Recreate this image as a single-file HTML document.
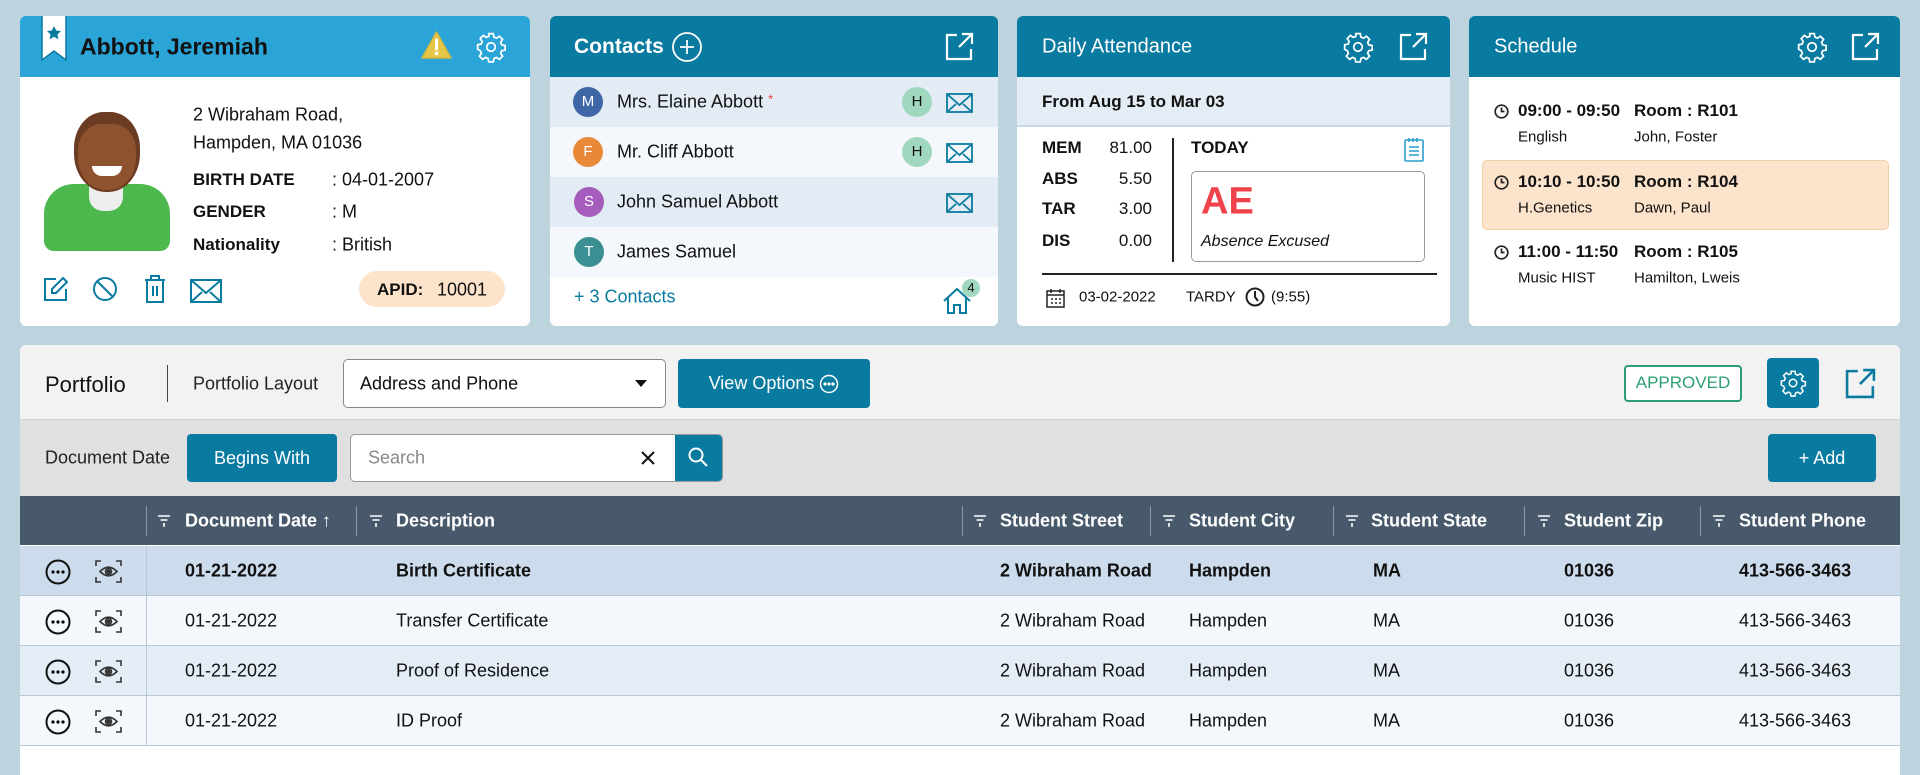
<!DOCTYPE html>
<html><head><meta charset="utf-8"><style>
*{box-sizing:border-box;margin:0;padding:0}
body{width:1920px;height:763px;overflow:hidden;background:#bdd3dd;font-family:"Liberation Sans",sans-serif;color:#111;position:relative}
.a{position:absolute}
.card{position:absolute;background:#fff;border-radius:6px;overflow:hidden;top:16px;height:310px}
.hd{position:absolute;left:0;top:0;right:0;height:61px;background:#0a7ba0;color:#fff}
.t{position:absolute;white-space:nowrap}
.c{transform:translateY(-50%)}
.f18{font-size:18px}.f17{font-size:17px}.f16{font-size:16px}.f15{font-size:15px}
.b{font-weight:bold}
svg{position:absolute;overflow:visible}
.row{position:absolute;left:0;right:0}
.btn{position:absolute;background:#0a7ba0;border-radius:4px;color:#fff;font-size:18px;display:flex;align-items:center;justify-content:center}
.th{font-size:18px;color:#fff;font-weight:bold;top:521px}
.vd{position:absolute;width:1px;background:#8a99a8;top:506px;height:30px}
</style></head><body>

<!-- Card 1 -->
<div class="card" style="left:20px;width:510px">
  <div class="hd" style="background:#2ba4d8"></div>
  <svg style="left:21px;top:0" width="26" height="45" viewBox="0 0 26 45"><path d="M1 0V44L13 35L25 44V0" fill="#fff" stroke="#0a7ba0" stroke-width="1.5"/><path d="M13 10l2.2 4.5 4.8.6-3.5 3.3.9 4.8-4.4-2.4-4.4 2.4.9-4.8-3.5-3.3 4.8-.6z" fill="#0a7ba0"/></svg>
  <div class="t c b" style="left:60px;top:31px;font-size:23px;color:#111">Abbott, Jeremiah</div>
  <svg style="left:401px;top:15px" width="31" height="28" viewBox="0 0 31 28"><path d="M15.5 1L30 27H1z" fill="#e6c74a" stroke="#d6b53a" stroke-width="1.5" stroke-linejoin="round"/><path d="M15.5 9v9" stroke="#fff" stroke-width="3" stroke-linecap="round"/><circle cx="15.5" cy="22.5" r="1.8" fill="#fff"/></svg>
  <svg style="left:455px;top:15px" width="32" height="32" viewBox="0 0 24 24" fill="none" stroke="#fff" stroke-width="1.3"><circle cx="12" cy="12" r="3.2"/><path d="M10.3 2h3.4l.5 2.6 1.9.8 2.2-1.5 2.4 2.4-1.5 2.2.8 1.9 2.6.5v3.4l-2.6.5-.8 1.9 1.5 2.2-2.4 2.4-2.2-1.5-1.9.8-.5 2.6h-3.4l-.5-2.6-1.9-.8-2.2 1.5-2.4-2.4 1.5-2.2-.8-1.9L2 13.7v-3.4l2.6-.5.8-1.9-1.5-2.2 2.4-2.4 2.2 1.5 1.9-.8z"/></svg>
  <div class="a" style="left:24px;top:88px;width:126px;height:147px;border-radius:10px;overflow:hidden;background:#fff">
    <div class="a" style="left:0;top:80px;width:126px;height:70px;background:#4cb84e;border-radius:30px 30px 10px 10px"></div>
    <div class="a" style="left:45px;top:82px;width:34px;height:25px;background:#eee;border-radius:0 0 14px 14px"></div>
    <div class="a" style="left:30px;top:8px;width:66px;height:80px;background:#6b3b22;border-radius:45% 45% 48% 48%"></div>
    <div class="a" style="left:34px;top:20px;width:58px;height:66px;background:#8e522e;border-radius:40% 40% 48% 48%"></div>
    <div class="a" style="left:48px;top:62px;width:30px;height:10px;background:#fff;border-radius:0 0 10px 10px"></div>
  </div>
  <div class="t c f18" style="left:173px;top:99px">2 Wibraham Road,</div>
  <div class="t c f18" style="left:173px;top:127px">Hampden, MA 01036</div>
  <div class="t c f17 b" style="left:173px;top:164px">BIRTH DATE</div>
  <div class="t c f18" style="left:312px;top:164px">: 04-01-2007</div>
  <div class="t c f17 b" style="left:173px;top:196px">GENDER</div>
  <div class="t c f18" style="left:312px;top:196px">: M</div>
  <div class="t c f17 b" style="left:173px;top:229px">Nationality</div>
  <div class="t c f18" style="left:312px;top:229px">: British</div>
  <svg style="left:23px;top:260px" width="26" height="26" viewBox="0 0 26 26" fill="none" stroke="#0a7ba0" stroke-width="2"><path d="M13 3H2v21h21V13"/><path d="M20 2l4 4-11 11H9v-4z"/></svg>
  <svg style="left:72px;top:260px" width="26" height="26" viewBox="0 0 26 26" fill="none" stroke="#0a7ba0" stroke-width="2"><circle cx="13" cy="13" r="11"/><path d="M5 5l16 16"/></svg>
  <svg style="left:124px;top:259px" width="22" height="28" viewBox="0 0 22 28" fill="none" stroke="#0a7ba0" stroke-width="2"><path d="M1 5h20M7 5V1h8v4M3 5v22h16V5M9 11v10M13 11v10"/></svg>
  <svg style="left:170px;top:263px" width="32" height="24" viewBox="0 0 32 24" fill="none" stroke="#0a7ba0" stroke-width="2"><rect x="1" y="1" width="30" height="22"/><path d="M1 1l15 13L31 1M1 23l11-10M31 23L20 13"/></svg>
  <div class="a" style="left:339px;top:255px;width:146px;height:36px;background:#fde3cc;border-radius:18px"></div>
  <div class="t c b f17" style="left:357px;top:274px">APID:</div>
  <div class="t c f18" style="left:417px;top:274px">10001</div>
</div>

<!-- Contacts -->
<div class="card" style="left:550px;width:448px">
  <div class="hd"></div>
  <div class="t c b" style="left:24px;top:31px;font-size:21px;color:#fff">Contacts</div>
  <svg style="left:122px;top:16px" width="30" height="30" viewBox="0 0 30 30" fill="none" stroke="#fff" stroke-width="1.8"><circle cx="15" cy="15" r="14"/><path d="M15 8v14M8 15h14"/></svg>
  <svg style="left:396px;top:17px" width="27" height="27" viewBox="0 0 27 27" fill="none" stroke="#fff" stroke-width="2.2"><path d="M11 2H1v24h24V16M16 1h10v10M26 1L13 14"/></svg>
  <div class="row" style="top:61px;height:50px;background:#e3ebf4"></div>
  <div class="row" style="top:111px;height:50px;background:#f4f7fb"></div>
  <div class="row" style="top:161px;height:50px;background:#e3ebf4"></div>
  <div class="row" style="top:211px;height:50px;background:#f4f7fb"></div>
  <div class="a" style="left:23px;top:71px;width:30px;height:30px;border-radius:50%;background:#3f66a6;color:#fff;font-size:15px;text-align:center;line-height:30px">M</div>
  <div class="a" style="left:23px;top:121px;width:30px;height:30px;border-radius:50%;background:#e8893a;color:#fff;font-size:15px;text-align:center;line-height:30px">F</div>
  <div class="a" style="left:24px;top:171px;width:30px;height:30px;border-radius:50%;background:#a55cbd;color:#fff;font-size:15px;text-align:center;line-height:30px">S</div>
  <div class="a" style="left:24px;top:221px;width:30px;height:30px;border-radius:50%;background:#3b8e91;color:#fff;font-size:15px;text-align:center;line-height:30px">T</div>
  <div class="t c f18" style="left:67px;top:86px">Mrs. Elaine Abbott <span style="color:#e04040;font-size:13px;vertical-align:top">*</span></div>
  <div class="t c f18" style="left:67px;top:136px">Mr. Cliff Abbott</div>
  <div class="t c f18" style="left:67px;top:186px">John Samuel Abbott</div>
  <div class="t c f18" style="left:67px;top:236px">James Samuel</div>
  <div class="a" style="left:352px;top:71px;width:30px;height:30px;border-radius:50%;background:#9fd8be;font-size:15px;text-align:center;line-height:30px">H</div>
  <div class="a" style="left:352px;top:121px;width:30px;height:30px;border-radius:50%;background:#9fd8be;font-size:15px;text-align:center;line-height:30px">H</div>
  <svg style="left:396px;top:77px" width="27" height="20" viewBox="0 0 27 20" fill="none" stroke="#0a7ba0" stroke-width="1.8"><rect x="1" y="1" width="25" height="18"/><path d="M1 1l12.5 11L26 1M1 19l9-8M26 19l-9-8"/></svg>
  <svg style="left:396px;top:127px" width="27" height="20" viewBox="0 0 27 20" fill="none" stroke="#0a7ba0" stroke-width="1.8"><rect x="1" y="1" width="25" height="18"/><path d="M1 1l12.5 11L26 1M1 19l9-8M26 19l-9-8"/></svg>
  <svg style="left:396px;top:177px" width="27" height="20" viewBox="0 0 27 20" fill="none" stroke="#0a7ba0" stroke-width="1.8"><rect x="1" y="1" width="25" height="18"/><path d="M1 1l12.5 11L26 1M1 19l9-8M26 19l-9-8"/></svg>
  <div class="t c f18" style="left:24px;top:281px;color:#0a7ba0">+ 3 Contacts</div>
  <svg style="left:393px;top:272px" width="28" height="26" viewBox="0 0 28 26" fill="none" stroke="#0a7ba0" stroke-width="2"><path d="M1 13L14 1l13 12M5 10v15h6v-8h6v8h6V10"/></svg>
  <div class="a" style="left:412px;top:263px;width:18px;height:18px;border-radius:50%;background:#9fd8be;font-size:13px;text-align:center;line-height:18px">4</div>
</div>

<!-- Attendance -->
<div class="card" style="left:1017px;width:433px">
  <div class="hd"></div>
  <div class="t c" style="left:25px;top:31px;font-size:20px;color:#fff">Daily Attendance</div>
  <svg style="left:325px;top:15px" width="32" height="32" viewBox="0 0 24 24" fill="none" stroke="#fff" stroke-width="1.3"><circle cx="12" cy="12" r="3.2"/><path d="M10.3 2h3.4l.5 2.6 1.9.8 2.2-1.5 2.4 2.4-1.5 2.2.8 1.9 2.6.5v3.4l-2.6.5-.8 1.9 1.5 2.2-2.4 2.4-2.2-1.5-1.9.8-.5 2.6h-3.4l-.5-2.6-1.9-.8-2.2 1.5-2.4-2.4 1.5-2.2-.8-1.9L2 13.7v-3.4l2.6-.5.8-1.9-1.5-2.2 2.4-2.4 2.2 1.5 1.9-.8z"/></svg>
  <svg style="left:383px;top:17px" width="27" height="27" viewBox="0 0 27 27" fill="none" stroke="#fff" stroke-width="2.2"><path d="M11 2H1v24h24V16M16 1h10v10M26 1L13 14"/></svg>
  <div class="row" style="top:61px;height:50px;background:#e4edf6;border-bottom:2px solid #c9d6e3"></div>
  <div class="t c b f17" style="left:25px;top:86px">From Aug 15 to Mar 03</div>
  <div class="t c b f17" style="left:25px;top:132px">MEM</div><div class="t c f17" style="right:298px;top:132px">81.00</div>
  <div class="t c b f17" style="left:25px;top:163px">ABS</div><div class="t c f17" style="right:298px;top:163px">5.50</div>
  <div class="t c b f17" style="left:25px;top:193px">TAR</div><div class="t c f17" style="right:298px;top:193px">3.00</div>
  <div class="t c b f17" style="left:25px;top:225px">DIS</div><div class="t c f17" style="right:298px;top:225px">0.00</div>
  <div class="a" style="left:155px;top:122px;width:2px;height:124px;background:#222"></div>
  <div class="t c b f17" style="left:174px;top:132px">TODAY</div>
  <svg style="left:387px;top:121px" width="20" height="25" viewBox="0 0 20 25" fill="none" stroke="#2a9fcc" stroke-width="1.6"><rect x="1" y="3" width="18" height="21" rx="1"/><path d="M5 1v4M9 1v4M13 1v4M5 10h10M5 14h10M5 18h10"/></svg>
  <div class="a" style="left:174px;top:155px;width:234px;height:91px;border:1.5px solid #999;border-radius:5px"></div>
  <div class="t c b" style="left:184px;top:186px;font-size:38px;color:#f0424a">AE</div>
  <div class="t c" style="left:184px;top:226px;font-size:16px;font-style:italic">Absence Excused</div>
  <div class="a" style="left:25px;top:257px;width:395px;height:2px;background:#222"></div>
  <svg style="left:29px;top:272px" width="19" height="20" viewBox="0 0 19 20" fill="none" stroke="#222" stroke-width="1.5"><rect x="1" y="3" width="17" height="16"/><path d="M1 7h17M5 1v4M14 1v4M5 11h2M9 11h2M13 11h2M5 15h2M9 15h2M13 15h2"/></svg>
  <div class="t c f15" style="left:62px;top:281px">03-02-2022</div>
  <div class="t c f15" style="left:169px;top:281px">TARDY</div>
  <svg style="left:228px;top:271px" width="20" height="20" viewBox="0 0 20 20" fill="none" stroke="#222" stroke-width="2"><circle cx="10" cy="10" r="8.5"/><path d="M10 4v6l3 4"/></svg>
  <div class="t c f15" style="left:254px;top:281px">(9:55)</div>
</div>

<!-- Schedule -->
<div class="card" style="left:1469px;width:431px">
  <div class="hd"></div>
  <div class="t c" style="left:25px;top:31px;font-size:20px;color:#fff">Schedule</div>
  <svg style="left:327px;top:15px" width="32" height="32" viewBox="0 0 24 24" fill="none" stroke="#fff" stroke-width="1.3"><circle cx="12" cy="12" r="3.2"/><path d="M10.3 2h3.4l.5 2.6 1.9.8 2.2-1.5 2.4 2.4-1.5 2.2.8 1.9 2.6.5v3.4l-2.6.5-.8 1.9 1.5 2.2-2.4 2.4-2.2-1.5-1.9.8-.5 2.6h-3.4l-.5-2.6-1.9-.8-2.2 1.5-2.4-2.4 1.5-2.2-.8-1.9L2 13.7v-3.4l2.6-.5.8-1.9-1.5-2.2 2.4-2.4 2.2 1.5 1.9-.8z"/></svg>
  <svg style="left:383px;top:17px" width="27" height="27" viewBox="0 0 27 27" fill="none" stroke="#fff" stroke-width="2.2"><path d="M11 2H1v24h24V16M16 1h10v10M26 1L13 14"/></svg>
  <div class="a" style="left:13px;top:144px;width:407px;height:70px;background:#fce3cb;border:1px solid #f2cfa8;border-radius:5px"></div>
  <svg style="left:25px;top:88px" width="15" height="15" viewBox="0 0 15 15" fill="none" stroke="#222" stroke-width="1.7"><circle cx="7.5" cy="7.5" r="6.3"/><path d="M7.5 3.5v4h3"/></svg>
  <div class="t c b f17" style="left:49px;top:95px">09:00 - 09:50</div><div class="t c b f17" style="left:165px;top:95px">Room : R101</div>
  <div class="t c f15" style="left:49px;top:121px">English</div><div class="t c f15" style="left:165px;top:121px">John, Foster</div>
  <svg style="left:25px;top:159px" width="15" height="15" viewBox="0 0 15 15" fill="none" stroke="#222" stroke-width="1.7"><circle cx="7.5" cy="7.5" r="6.3"/><path d="M7.5 3.5v4h3"/></svg>
  <div class="t c b f17" style="left:49px;top:166px">10:10 - 10:50</div><div class="t c b f17" style="left:165px;top:166px">Room : R104</div>
  <div class="t c f15" style="left:49px;top:192px">H.Genetics</div><div class="t c f15" style="left:165px;top:192px">Dawn, Paul</div>
  <svg style="left:25px;top:229px" width="15" height="15" viewBox="0 0 15 15" fill="none" stroke="#222" stroke-width="1.7"><circle cx="7.5" cy="7.5" r="6.3"/><path d="M7.5 3.5v4h3"/></svg>
  <div class="t c b f17" style="left:49px;top:236px">11:00 - 11:50</div><div class="t c b f17" style="left:165px;top:236px">Room : R105</div>
  <div class="t c f15" style="left:49px;top:262px">Music HIST</div><div class="t c f15" style="left:165px;top:262px">Hamilton, Lweis</div>
</div>

<!-- Portfolio -->
<div class="a" style="left:20px;top:345px;width:1880px;height:430px;background:#fff;border-radius:6px 6px 0 0;overflow:hidden">
  <div class="row" style="top:0;height:75px;background:#f2f2f2;border-bottom:1px solid #cfcfcf"></div>
  <div class="row" style="top:75px;height:76px;background:#e0e0e0"></div>
  <div class="row" style="top:151px;height:49px;background:#48596b"></div>
  <div class="row" style="top:201px;height:50px;background:#cddcec;border-bottom:1px solid #b7c8d9"></div>
  <div class="row" style="top:251px;height:50px;background:#f4f8fc;border-bottom:1px solid #b7c8d9"></div>
  <div class="row" style="top:301px;height:50px;background:#e4edf6;border-bottom:1px solid #b7c8d9"></div>
  <div class="row" style="top:351px;height:50px;background:#f4f8fc;border-bottom:1px solid #b7c8d9"></div>
  <div class="a" style="left:126px;top:201px;width:1px;height:200px;background:#b7c8d9"></div>
</div>
<div class="t c" style="left:45px;top:385px;font-size:22px">Portfolio</div>
<div class="a" style="left:167px;top:365px;width:1px;height:37px;background:#444"></div>
<div class="t c f18" style="left:193px;top:384px;color:#222">Portfolio Layout</div>
<div class="a" style="left:343px;top:359px;width:323px;height:49px;background:#fff;border:1px solid #888;border-radius:5px"></div>
<div class="t c f18" style="left:360px;top:384px">Address and Phone</div>
<svg style="left:635px;top:380px" width="12" height="7" viewBox="0 0 12 7"><path d="M0 0h12L6 7z" fill="#111"/></svg>
<div class="btn" style="left:678px;top:359px;width:192px;height:49px">View Options&nbsp;<svg style="position:relative" width="20" height="20" viewBox="0 0 20 20" fill="none" stroke="#fff" stroke-width="1.5"><circle cx="10" cy="10" r="8.5"/><circle cx="6" cy="10" r=".9" fill="#fff"/><circle cx="10" cy="10" r=".9" fill="#fff"/><circle cx="14" cy="10" r=".9" fill="#fff"/></svg></div>
<div class="a" style="left:1624px;top:365px;width:118px;height:37px;border:2.5px solid #2e9e72;border-radius:4px;background:#fff;color:#2e9e72;font-size:17px;text-align:center;line-height:32px">APPROVED</div>
<div class="btn" style="left:1767px;top:358px;width:52px;height:50px"><svg style="position:relative" width="28" height="28" viewBox="0 0 24 24" fill="none" stroke="#fff" stroke-width="1.3"><circle cx="12" cy="12" r="3.2"/><path d="M10.3 2h3.4l.5 2.6 1.9.8 2.2-1.5 2.4 2.4-1.5 2.2.8 1.9 2.6.5v3.4l-2.6.5-.8 1.9 1.5 2.2-2.4 2.4-2.2-1.5-1.9.8-.5 2.6h-3.4l-.5-2.6-1.9-.8-2.2 1.5-2.4-2.4 1.5-2.2-.8-1.9L2 13.7v-3.4l2.6-.5.8-1.9-1.5-2.2 2.4-2.4 2.2 1.5 1.9-.8z"/></svg></div>
<svg style="left:1846px;top:369px" width="29" height="29" viewBox="0 0 27 27" fill="none" stroke="#0a7ba0" stroke-width="2.4"><path d="M11 2H1v24h24V16M16 1h10v10M26 1L13 14"/></svg>

<div class="t c f18" style="left:45px;top:458px;color:#222">Document Date</div>
<div class="btn" style="left:187px;top:434px;width:150px;height:48px">Begins With</div>
<div class="a" style="left:350px;top:434px;width:373px;height:48px;background:#fff;border:1px solid #999;border-radius:5px;overflow:hidden"><div class="a" style="right:0;top:0;width:47px;height:48px;background:#0a7ba0"></div></div>
<div class="t c f18" style="left:368px;top:458px;color:#888">Search</div>
<svg style="left:641px;top:451px" width="14" height="14" viewBox="0 0 14 14" stroke="#111" stroke-width="2"><path d="M1 1l12 12M13 1L1 13"/></svg>
<svg style="left:688px;top:447px" width="20" height="20" viewBox="0 0 20 20" fill="none" stroke="#fff" stroke-width="2"><circle cx="8" cy="8" r="6.5"/><path d="M13 13l6 6"/></svg>
<div class="btn" style="left:1768px;top:434px;width:108px;height:48px">+ Add</div>

<div class="vd" style="left:146px"></div><div class="vd" style="left:356px"></div><div class="vd" style="left:962px"></div><div class="vd" style="left:1150px"></div><div class="vd" style="left:1333px"></div><div class="vd" style="left:1524px"></div><div class="vd" style="left:1700px"></div>
<svg style="left:157px;top:514px" width="14" height="14" viewBox="0 0 14 14" stroke="#fff" stroke-width="1.5"><path d="M1 2h12M3.5 6h7M6 10h2M7 10v3"/></svg>
<svg style="left:369px;top:514px" width="14" height="14" viewBox="0 0 14 14" stroke="#fff" stroke-width="1.5"><path d="M1 2h12M3.5 6h7M6 10h2M7 10v3"/></svg>
<svg style="left:973px;top:514px" width="14" height="14" viewBox="0 0 14 14" stroke="#fff" stroke-width="1.5"><path d="M1 2h12M3.5 6h7M6 10h2M7 10v3"/></svg>
<svg style="left:1162px;top:514px" width="14" height="14" viewBox="0 0 14 14" stroke="#fff" stroke-width="1.5"><path d="M1 2h12M3.5 6h7M6 10h2M7 10v3"/></svg>
<svg style="left:1345px;top:514px" width="14" height="14" viewBox="0 0 14 14" stroke="#fff" stroke-width="1.5"><path d="M1 2h12M3.5 6h7M6 10h2M7 10v3"/></svg>
<svg style="left:1537px;top:514px" width="14" height="14" viewBox="0 0 14 14" stroke="#fff" stroke-width="1.5"><path d="M1 2h12M3.5 6h7M6 10h2M7 10v3"/></svg>
<svg style="left:1712px;top:514px" width="14" height="14" viewBox="0 0 14 14" stroke="#fff" stroke-width="1.5"><path d="M1 2h12M3.5 6h7M6 10h2M7 10v3"/></svg>
<div class="t c th" style="left:185px">Document Date ↑</div>
<div class="t c th" style="left:396px">Description</div>
<div class="t c th" style="left:1000px">Student Street</div>
<div class="t c th" style="left:1189px">Student City</div>
<div class="t c th" style="left:1371px">Student State</div>
<div class="t c th" style="left:1564px">Student Zip</div>
<div class="t c th" style="left:1739px">Student Phone</div>

<div class="t c f18 b" style="left:185px;top:571px">01-21-2022</div><div class="t c f18 b" style="left:396px;top:571px">Birth Certificate</div><div class="t c f18 b" style="left:1000px;top:571px">2 Wibraham Road</div><div class="t c f18 b" style="left:1189px;top:571px">Hampden</div><div class="t c f18 b" style="left:1373px;top:571px">MA</div><div class="t c f18 b" style="left:1564px;top:571px">01036</div><div class="t c f18 b" style="left:1739px;top:571px">413-566-3463</div>
<div class="t c f18" style="left:185px;top:621px">01-21-2022</div><div class="t c f18" style="left:396px;top:621px">Transfer Certificate</div><div class="t c f18" style="left:1000px;top:621px">2 Wibraham Road</div><div class="t c f18" style="left:1189px;top:621px">Hampden</div><div class="t c f18" style="left:1373px;top:621px">MA</div><div class="t c f18" style="left:1564px;top:621px">01036</div><div class="t c f18" style="left:1739px;top:621px">413-566-3463</div>
<div class="t c f18" style="left:185px;top:671px">01-21-2022</div><div class="t c f18" style="left:396px;top:671px">Proof of Residence</div><div class="t c f18" style="left:1000px;top:671px">2 Wibraham Road</div><div class="t c f18" style="left:1189px;top:671px">Hampden</div><div class="t c f18" style="left:1373px;top:671px">MA</div><div class="t c f18" style="left:1564px;top:671px">01036</div><div class="t c f18" style="left:1739px;top:671px">413-566-3463</div>
<div class="t c f18" style="left:185px;top:721px">01-21-2022</div><div class="t c f18" style="left:396px;top:721px">ID Proof</div><div class="t c f18" style="left:1000px;top:721px">2 Wibraham Road</div><div class="t c f18" style="left:1189px;top:721px">Hampden</div><div class="t c f18" style="left:1373px;top:721px">MA</div><div class="t c f18" style="left:1564px;top:721px">01036</div><div class="t c f18" style="left:1739px;top:721px">413-566-3463</div>

<svg style="left:45px;top:559px" width="26" height="26" viewBox="0 0 26 26"><circle cx="13" cy="13" r="11.5" fill="none" stroke="#111" stroke-width="2"/><circle cx="8" cy="13" r="1.6"/><circle cx="13" cy="13" r="1.6"/><circle cx="18" cy="13" r="1.6"/></svg>
<svg style="left:45px;top:609px" width="26" height="26" viewBox="0 0 26 26"><circle cx="13" cy="13" r="11.5" fill="none" stroke="#111" stroke-width="2"/><circle cx="8" cy="13" r="1.6"/><circle cx="13" cy="13" r="1.6"/><circle cx="18" cy="13" r="1.6"/></svg>
<svg style="left:45px;top:659px" width="26" height="26" viewBox="0 0 26 26"><circle cx="13" cy="13" r="11.5" fill="none" stroke="#111" stroke-width="2"/><circle cx="8" cy="13" r="1.6"/><circle cx="13" cy="13" r="1.6"/><circle cx="18" cy="13" r="1.6"/></svg>
<svg style="left:45px;top:709px" width="26" height="26" viewBox="0 0 26 26"><circle cx="13" cy="13" r="11.5" fill="none" stroke="#111" stroke-width="2"/><circle cx="8" cy="13" r="1.6"/><circle cx="13" cy="13" r="1.6"/><circle cx="18" cy="13" r="1.6"/></svg>
<svg style="left:95px;top:560px" width="27" height="23" viewBox="0 0 27 23" fill="none" stroke="#333" stroke-width="1.6"><path d="M1 6V1h5M21 1h5v5M26 17v5h-5M6 22H1v-5"/><path d="M5 11.5Q13.5 3 22 11.5Q13.5 20 5 11.5z"/><circle cx="13.5" cy="11.5" r="3"/><circle cx="13.5" cy="11.5" r="1.3" fill="#333"/></svg>
<svg style="left:95px;top:610px" width="27" height="23" viewBox="0 0 27 23" fill="none" stroke="#333" stroke-width="1.6"><path d="M1 6V1h5M21 1h5v5M26 17v5h-5M6 22H1v-5"/><path d="M5 11.5Q13.5 3 22 11.5Q13.5 20 5 11.5z"/><circle cx="13.5" cy="11.5" r="3"/><circle cx="13.5" cy="11.5" r="1.3" fill="#333"/></svg>
<svg style="left:95px;top:660px" width="27" height="23" viewBox="0 0 27 23" fill="none" stroke="#333" stroke-width="1.6"><path d="M1 6V1h5M21 1h5v5M26 17v5h-5M6 22H1v-5"/><path d="M5 11.5Q13.5 3 22 11.5Q13.5 20 5 11.5z"/><circle cx="13.5" cy="11.5" r="3"/><circle cx="13.5" cy="11.5" r="1.3" fill="#333"/></svg>
<svg style="left:95px;top:710px" width="27" height="23" viewBox="0 0 27 23" fill="none" stroke="#333" stroke-width="1.6"><path d="M1 6V1h5M21 1h5v5M26 17v5h-5M6 22H1v-5"/><path d="M5 11.5Q13.5 3 22 11.5Q13.5 20 5 11.5z"/><circle cx="13.5" cy="11.5" r="3"/><circle cx="13.5" cy="11.5" r="1.3" fill="#333"/></svg>
</body></html>
